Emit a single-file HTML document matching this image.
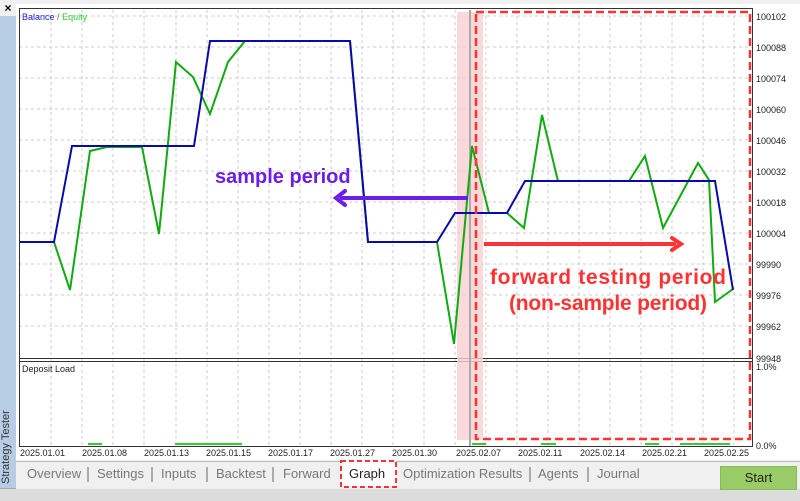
<!DOCTYPE html>
<html><head><meta charset="utf-8"><style>
body{margin:0;width:800px;height:500px;overflow:hidden;background:#f0f0f0;font-family:"Liberation Sans",sans-serif;position:relative}
.a{position:absolute}
.tab{position:absolute;top:466px;font-size:13px;color:#777}
</style></head><body>
<div class="a" style="left:0;top:0;width:16px;height:490px;background:#b7cde4"></div>
<div class="a" style="left:0;top:0;width:16px;height:16px;background:#f0f0f0;font-size:12px;font-weight:bold;text-align:center;line-height:16px">×</div>
<div class="a" style="left:-38px;top:432px;width:90px;height:14px;transform:rotate(-90deg);font-size:11px;color:#333;white-space:nowrap">Strategy Tester</div>
<div class="a" style="left:16px;top:4px;width:784px;height:456px;background:#fff"></div>
<div class="a" style="left:0;top:488px;width:800px;height:12px;background:#dcdcdc;border-top:1px solid #aaa"></div>
<svg class="a" style="left:0;top:0" width="800" height="500" font-family="Liberation Sans, sans-serif">
<g stroke="#ccc" stroke-dasharray="3,3" stroke-width="1">
<path d="M51 10V446M82 10V446M113 10V446M144 10V446M176 10V446M207 10V446M238 10V446M269 10V446M300 10V446M331 10V446M362 10V446M393 10V446M424 10V446M455 10V446M486 10V446M517 10V446M548 10V446M579 10V446M610 10V446M641 10V446M672 10V446M703 10V446M734 10V446"/>
<path d="M19 16H752M19 47H752M19 78H752M19 109H752M19 140H752M19 171H752M19 202H752M19 233H752M19 264H752M19 295H752M19 326H752"/>
</g>
<rect x="19.5" y="8.5" width="733" height="438" fill="none" stroke="#333"/>
<path d="M19 358.5H752M19 361.5H752" stroke="#333"/>
<rect x="457" y="12" width="26" height="428" fill="#f8d0d0" opacity="0.8"/>
<path d="M470 10V446" stroke="#aaa" stroke-width="2"/>
<text x="22" y="20" font-size="9" fill="#22c">Balance <tspan fill="#666">/</tspan> <tspan fill="#3c3">Equity</tspan></text>
<text x="22" y="372" font-size="9" fill="#222">Deposit Load</text>
<polyline fill="none" stroke="#1a1" stroke-width="2" points="20,242 54,242 70,290 90,151 107,147 142,147 159,234 176,62 193,77 210,114 228,62 245,41 350,41 368,242 437,242 454,344 472,146 489,213 507,213 524,228 542,115 558,181 629,181 645,156 663,228 698,163 709,180 715,302 733,289"/>
<polyline fill="none" stroke="#0a0aa8" stroke-width="2" points="20,242 54,242 72,146 194,146 210,41 350,41 368,242 437,242 455,213 507,213 525,181 715,181 733,290"/>
<g stroke="#3c3" stroke-width="2"><path d="M88 444H102M175 444H242M472 444H486M541 444H556M645 444H659M680 444H730"/></g>
<g font-size="9" fill="#222">
<text x="756" y="20">100102</text><text x="756" y="51">100088</text><text x="756" y="82">100074</text><text x="756" y="113">100060</text><text x="756" y="144">100046</text><text x="756" y="175">100032</text><text x="756" y="206">100018</text><text x="756" y="237">100004</text><text x="756" y="268">99990</text><text x="756" y="299">99976</text><text x="756" y="330">99962</text><text x="756" y="362">99948</text><text x="756" y="370">1.0%</text><text x="756" y="449">0.0%</text>
<text x="20" y="456">2025.01.01</text><text x="82" y="456">2025.01.08</text><text x="144" y="456">2025.01.13</text><text x="206" y="456">2025.01.15</text><text x="268" y="456">2025.01.17</text><text x="330" y="456">2025.01.27</text><text x="392" y="456">2025.01.30</text><text x="456" y="456">2025.02.07</text><text x="518" y="456">2025.02.11</text><text x="580" y="456">2025.02.14</text><text x="642" y="456">2025.02.21</text><text x="704" y="456">2025.02.25</text>
</g>
<rect x="476" y="12" width="274" height="427" fill="none" stroke="#ff3333" stroke-width="2.5" stroke-dasharray="8,4"/>
<path d="M340 198H468" stroke="#6a1ee8" stroke-width="4"/>
<path d="M345 191L336 198L345 205" fill="none" stroke="#6a1ee8" stroke-width="4" stroke-linecap="round"/>
<text x="215" y="183" font-size="20" font-weight="bold" fill="#6a1ee8">sample period</text>
<path d="M484 244H676" stroke="#ff3333" stroke-width="4"/>
<path d="M672 238L681 244L672 250" fill="none" stroke="#ff3333" stroke-width="4" stroke-linecap="round"/>
<text x="608" y="284" font-size="21" font-weight="bold" fill="#ff3333" text-anchor="middle" textLength="236">forward testing period</text>
<text x="608" y="310" font-size="21" font-weight="bold" fill="#ff3333" text-anchor="middle" textLength="198">(non-sample period)</text>
<rect x="16" y="461" width="784" height="28" fill="#f0f0f0"/>
<path d="M16 461.5H800" stroke="#bbb"/>
<g stroke="#666"><path d="M88 467V482M152 467V482M207 467V482M273 467V482M530 467V482M588 467V482"/></g>
<rect x="341" y="461" width="55" height="26" fill="#fff" stroke="#ff3333" stroke-width="2" stroke-dasharray="5,3"/>
</svg>
<div class="tab" style="left:27px">Overview</div>
<div class="tab" style="left:97px">Settings</div>
<div class="tab" style="left:161px">Inputs</div>
<div class="tab" style="left:216px">Backtest</div>
<div class="tab" style="left:283px">Forward</div>
<div class="tab" style="left:349px;color:#222">Graph</div>
<div class="tab" style="left:403px">Optimization Results</div>
<div class="tab" style="left:538px">Agents</div>
<div class="tab" style="left:597px">Journal</div>
<div class="a" style="left:720px;top:466px;width:75px;height:22px;background:#99cc66;border:1px solid #8b5;font-size:13px;text-align:center;line-height:22px;color:#222">Start</div>
</body></html>
